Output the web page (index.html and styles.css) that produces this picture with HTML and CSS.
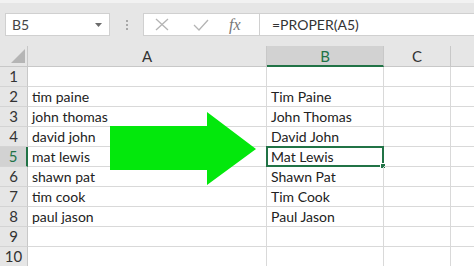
FILE: index.html
```html
<!DOCTYPE html>
<html lang="en">
<head>
  <meta charset="UTF-8">
  <meta name="viewport" content="width=device-width, initial-scale=1.0">
  <title>PROPER function</title>
  <link rel="stylesheet" href="styles.css">
</head>
<body>
  <div class="workbook">
    <!-- Name box and formula bar -->
    <div class="toolbar">
      <div class="name-box">
        <span>B5</span>
        <svg class="caret" width="7" height="4" viewBox="0 0 7 4"><path d="M0 0h7L3.5 4z" fill="#6b6b6b"/></svg>
      </div>
      <div class="grip"><i></i><i></i><i></i></div>
      <div class="formula-bar">
        <div class="fx-buttons">
          <svg width="14" height="13" viewBox="0 0 14 13"><path d="M1 1l12 11M13 1L1 12" stroke="#b4b4b4" stroke-width="1.3" fill="none"/></svg>
          <svg width="16" height="12" viewBox="0 0 16 12"><path d="M1 6l5 5L15 1" stroke="#b4b4b4" stroke-width="1.3" fill="none"/></svg>
          <span class="fx">fx</span>
        </div>
        <div class="formula-input">=PROPER(A5)</div>
      </div>
    </div>

    <!-- Sheet grid -->
    <div class="sheet">
      <div class="corner"><span class="corner-mark"></span></div>
      <div class="col-head">A</div>
      <div class="col-head active">B</div>
      <div class="col-head">C</div>
      <div class="col-head"></div>

      <div class="row-head">1</div><div class="cell"></div><div class="cell"></div><div class="cell"></div><div class="cell"></div>
      <div class="row-head">2</div><div class="cell">tim paine</div><div class="cell">Tim Paine</div><div class="cell"></div><div class="cell"></div>
      <div class="row-head">3</div><div class="cell">john thomas</div><div class="cell">John Thomas</div><div class="cell"></div><div class="cell"></div>
      <div class="row-head">4</div><div class="cell">david john</div><div class="cell">David John</div><div class="cell"></div><div class="cell"></div>
      <div class="row-head active">5</div><div class="cell">mat lewis</div><div class="cell selected">Mat Lewis<span class="fill-handle"></span></div><div class="cell"></div><div class="cell"></div>
      <div class="row-head">6</div><div class="cell">shawn pat</div><div class="cell">Shawn Pat</div><div class="cell"></div><div class="cell"></div>
      <div class="row-head">7</div><div class="cell">tim cook</div><div class="cell">Tim Cook</div><div class="cell"></div><div class="cell"></div>
      <div class="row-head">8</div><div class="cell">paul jason</div><div class="cell">Paul Jason</div><div class="cell"></div><div class="cell"></div>
      <div class="row-head">9</div><div class="cell"></div><div class="cell"></div><div class="cell"></div><div class="cell"></div>
      <div class="row-head">10</div><div class="cell"></div><div class="cell"></div><div class="cell"></div><div class="cell"></div>
    </div>

    <!-- Big green arrow drawn over the sheet -->
    <svg class="arrow" width="150" height="76" viewBox="0 0 150 76">
      <polygon points="0,14 97,14 97,0 146,37 97,73 97,58 0,58" fill="#03e80c"/>
    </svg>
  </div>
</body>
</html>
```

FILE: styles.css
```css
/* Reset */
* {
  box-sizing: border-box;
  margin: 0;
  padding: 0;
}

body {
  font-family: Lato, "Liberation Sans", sans-serif;
  background-color: #ffffff;
  color: #222;
  overflow: hidden;
}

.workbook {
  position: relative;
  width: 474px;
  height: 266px;
  overflow: hidden;
}

/* Toolbar */
.toolbar {
  height: 46px;
  background-color: #e6e6e6;
  border-top: 3px solid #f2f2f2;
  display: flex;
  align-items: flex-start;
  padding: 10px 0 0 5px;
}

.name-box {
  width: 105px;
  height: 23px;
  background-color: #fff;
  border: 1px solid #d0d0d0;
  display: flex;
  align-items: center;
  justify-content: space-between;
  padding: 0 7px 0 6px;
  font-size: 14px;
  color: #444;
}

.grip {
  width: 33px;
  height: 23px;
  display: flex;
  flex-direction: column;
  align-items: center;
  justify-content: center;
  gap: 2px;
}

.grip i {
  display: block;
  width: 2px;
  height: 2px;
  background-color: #a8a8a8;
}

.formula-bar {
  flex: 1;
  height: 23px;
  display: flex;
  background-color: #fff;
  border: 1px solid #d0d0d0;
  border-right: none;
}

.fx-buttons {
  width: 116px;
  display: flex;
  align-items: center;
  gap: 24px;
  padding-left: 11px;
  border-right: 1px solid #d0d0d0;
}

.fx {
  font-family: "Liberation Serif", serif;
  font-style: italic;
  font-size: 16px;
  color: #777;
  margin-left: -4px;
}

.formula-input {
  padding-left: 12px;
  font-size: 14px;
  line-height: 21px;
  color: #333;
}

/* Grid */
.sheet {
  display: grid;
  grid-template-columns: 28px 239px 117px 67px 60px;
  grid-template-rows: 21px repeat(10, 20px);
}

.corner {
  position: relative;
  background-color: #e6e6e6;
  border-right: 1px solid #c8c8c8;
  border-bottom: 1px solid #c8c8c8;
}

.corner-mark {
  position: absolute;
  right: 2px;
  bottom: 3px;
  width: 0;
  height: 0;
  border-left: 14px solid transparent;
  border-bottom: 14px solid #b5b5b5;
}

.col-head {
  background-color: #e6e6e6;
  border-right: 1px solid #c8c8c8;
  border-bottom: 1px solid #c8c8c8;
  text-align: center;
  font-size: 15px;
  line-height: 20px;
  color: #333;
}

.col-head.active {
  background-color: #d2d2d2;
  border-bottom: 2px solid #217346;
  color: #217346;
}

.row-head {
  background-color: #e6e6e6;
  border-right: 1px solid #c8c8c8;
  border-bottom: 1px solid #d4d4d4;
  text-align: center;
  font-size: 15px;
  line-height: 19px;
  color: #333;
}

.row-head.active {
  background-color: #d2d2d2;
  border-right: 2px solid #217346;
  color: #217346;
}

.cell {
  position: relative;
  border-right: 1px solid #d9d9d9;
  border-bottom: 1px solid #d9d9d9;
  padding-left: 4px;
  font-size: 14px;
  line-height: 19px;
  white-space: nowrap;
  color: #222;
}

.cell.selected {
  border: 2px solid #217346;
  margin: -1px 0 0 -1px;
  padding-left: 3px;
  line-height: 17px;
}

.fill-handle {
  position: absolute;
  right: -4px;
  bottom: -4px;
  width: 6px;
  height: 6px;
  background-color: #217346;
  border: 1px solid #fff;
}

/* Arrow overlay */
.arrow {
  position: absolute;
  left: 110px;
  top: 112px;
}
```
